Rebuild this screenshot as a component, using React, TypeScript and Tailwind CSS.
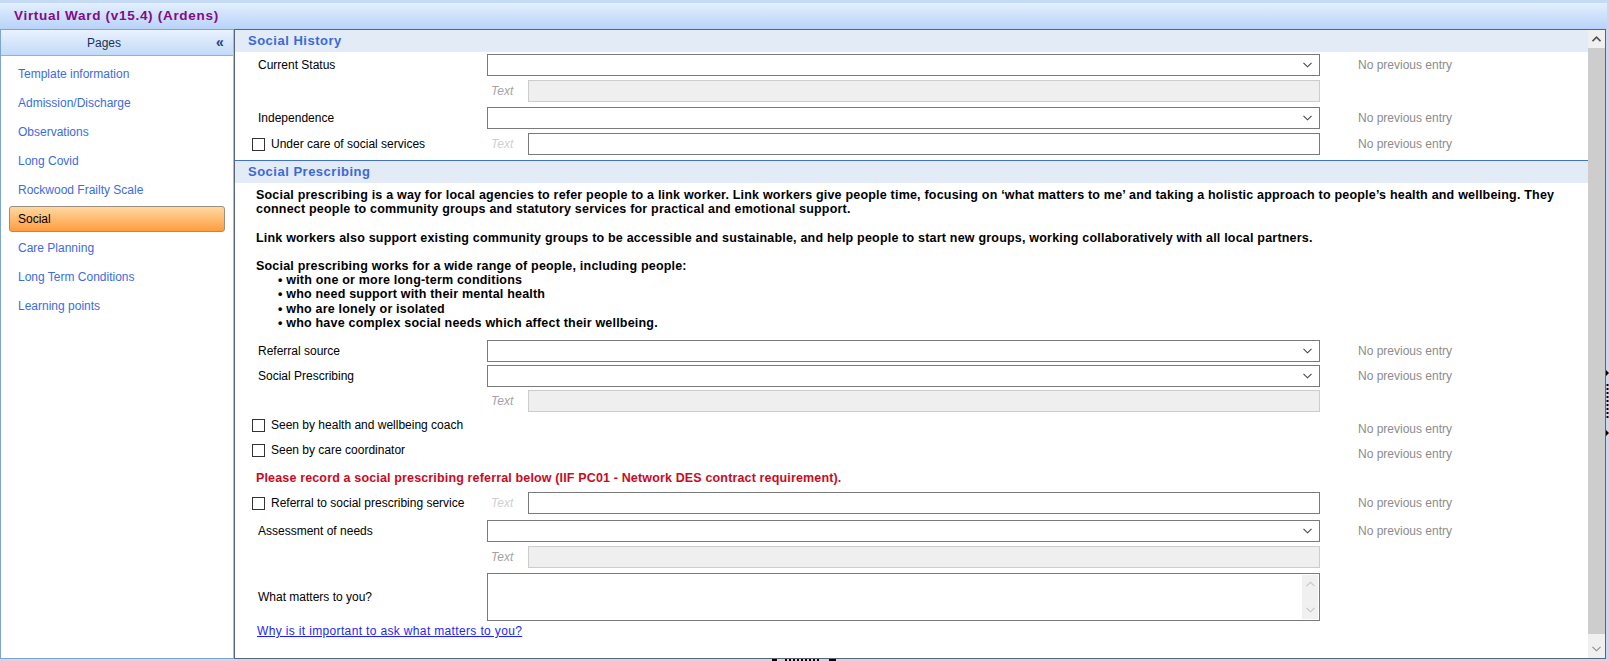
import React from "react";

const navItems = [
  "Template information",
  "Admission/Discharge",
  "Observations",
  "Long Covid",
  "Rockwood Frailty Scale",
  "Social",
  "Care Planning",
  "Long Term Conditions",
  "Learning points",
];

function ChevronDown({ color = "#444" }: { color?: string }) {
  return (
    <svg width="9" height="6" viewBox="0 0 9 6">
      <path d="M0.5 0.8 L4.5 4.8 L8.5 0.8" fill="none" stroke={color} strokeWidth="1.1" />
    </svg>
  );
}

function ChevronUp({ color = "#444", width = 1.1 }: { color?: string; width?: number }) {
  return (
    <svg width="9" height="6" viewBox="0 0 9 6">
      <path d="M0.5 5.2 L4.5 1.2 L8.5 5.2" fill="none" stroke={color} strokeWidth={width} />
    </svg>
  );
}

function Dropdown() {
  return (
    <div className="h-[22px] w-[833px] border border-[#7a7a7a] bg-white flex items-center justify-end pr-[7px]">
      <ChevronDown />
    </div>
  );
}

function TextField({ disabled }: { disabled?: boolean }) {
  return (
    <div className="flex items-center pl-[4px] h-[22px]">
      <span
        className={
          disabled
            ? "w-[37px] italic text-[#a3a3a3]"
            : "w-[37px] italic text-[#d0d0d0]"
        }
      >
        Text
      </span>
      {disabled ? (
        <div className="h-[22px] w-[792px] border border-[#cccccc] bg-[#efefef]" />
      ) : (
        <div className="h-[22px] w-[792px] border border-[#7a7a7a] bg-white" />
      )}
    </div>
  );
}

function Checkbox({ label }: { label: string }) {
  return (
    <div className="flex items-center h-[14px] pl-[17px]">
      <div className="w-[13px] h-[13px] border border-[#333333] bg-white shrink-0" />
      <span className="ml-[6px] whitespace-nowrap">{label}</span>
    </div>
  );
}

function Label({ text }: { text: string }) {
  return <div className="pl-[23px] whitespace-nowrap">{text}</div>;
}

function Prev() {
  return <div className="ml-[38px] text-[#8c8c8c] whitespace-nowrap">No previous entry</div>;
}

function SectionBand({ title }: { title: string }) {
  return (
    <div className="h-[22px] bg-[#e3ebf7] pl-[13px] flex items-center text-[13px] tracking-[0.5px] font-bold text-[#3b69d5]">
      {title}
    </div>
  );
}

export default function App() {
  return (
    <div className="relative w-[1609px] h-[661px] bg-[#c6daf4] font-['Liberation_Sans',Arial,sans-serif] text-[12px] text-black overflow-hidden">
      {/* title bar */}
      <div className="h-[29px] border-t-[3px] border-[#c5daf4] bg-linear-to-b from-[#e3effe] to-[#b8d3f8] flex items-center pl-[14px] w-[1607px]">
        <span className="text-[13.5px] tracking-[0.7px] font-bold text-[#860a86]">Virtual Ward (v15.4) (Ardens)</span>
      </div>

      <div className="flex h-[630px]">
        {/* pages panel */}
        <div className="w-[234px] h-full border border-[#7ea4d6] border-r-[#a9bdd6] bg-white flex flex-col">
          <div className="h-[26px] border-b border-[#8db0df] bg-linear-to-b from-[#e9f2fe] to-[#c3daf8] flex items-center">
            <div className="flex-1 text-center text-[#15325a]">Pages</div>
            <div className="w-[26px] text-center text-[14px] font-bold leading-none text-[#23427a] pb-[2px]">«</div>
          </div>
          <div className="pt-[3px] flex flex-col">
            {navItems.map((item) =>
              item === "Social" ? (
                <div key={item} className="h-[29px] px-[8px] flex items-center">
                  <div className="h-[26px] w-full rounded-[3px] border border-[#9a8f80] bg-linear-to-b from-[#ffd89e] to-[#ff9c3a] flex items-center pl-[8px] text-black">
                    {item}
                  </div>
                </div>
              ) : (
                <div key={item} className="h-[29px] pl-[17px] flex items-center text-[#3d6be0]">
                  {item}
                </div>
              )
            )}
          </div>
        </div>

        {/* main form panel */}
        <div className="w-[1372px] h-full border border-[#56657c] bg-white flex">
          <div className="flex-1 flex flex-col">
            <SectionBand title="Social History" />

            <div className="mt-[2px] h-[22px] flex items-center">
              <div className="w-[252px] shrink-0"><Label text="Current Status" /></div>
              <Dropdown />
              <Prev />
            </div>
            <div className="mt-[4px] h-[22px] flex items-center">
              <div className="w-[252px] shrink-0" />
              <div className="w-[833px]"><TextField disabled /></div>
            </div>
            <div className="mt-[5px] h-[22px] flex items-center">
              <div className="w-[252px] shrink-0"><Label text="Independence" /></div>
              <Dropdown />
              <Prev />
            </div>
            <div className="mt-[4px] h-[22px] flex items-center">
              <div className="w-[252px] shrink-0"><Checkbox label="Under care of social services" /></div>
              <div className="w-[833px]"><TextField /></div>
              <Prev />
            </div>

            <div className="mt-[5px] border-t border-[#3f72d0]">
              <SectionBand title="Social Prescribing" />
            </div>

            <div className="mt-[5px] pl-[21px] font-bold text-[12.5px] tracking-[0.2px] leading-[14.2px] whitespace-nowrap">
              <div>
                Social prescribing is a way for local agencies to refer people to a link worker. Link workers give people time, focusing on ‘what matters to me’ and taking a holistic approach to people’s health and wellbeing. They
              </div>
              <div>connect people to community groups and statutory services for practical and emotional support.</div>
              <div>&nbsp;</div>
              <div>Link workers also support existing community groups to be accessible and sustainable, and help people to start new groups, working collaboratively with all local partners.</div>
              <div>&nbsp;</div>
              <div>Social prescribing works for a wide range of people, including people:</div>
              <div className="pl-[22px]">• with one or more long-term conditions</div>
              <div className="pl-[22px]">• who need support with their mental health</div>
              <div className="pl-[22px]">• who are lonely or isolated</div>
              <div className="pl-[22px]">• who have complex social needs which affect their wellbeing.</div>
            </div>

            <div className="mt-[10px] h-[22px] flex items-center">
              <div className="w-[252px] shrink-0"><Label text="Referral source" /></div>
              <Dropdown />
              <Prev />
            </div>
            <div className="mt-[3px] h-[22px] flex items-center">
              <div className="w-[252px] shrink-0"><Label text="Social Prescribing" /></div>
              <Dropdown />
              <Prev />
            </div>
            <div className="mt-[3px] h-[22px] flex items-center">
              <div className="w-[252px] shrink-0" />
              <div className="w-[833px]"><TextField disabled /></div>
            </div>
            <div className="mt-[6px] h-[22px] flex items-start">
              <div className="w-[252px] shrink-0"><Checkbox label="Seen by health and wellbeing coach" /></div>
              <div className="w-[833px] shrink-0" />
              <div className="h-[22px] flex items-center"><Prev /></div>
            </div>
            <div className="mt-[3px] h-[22px] flex items-start">
              <div className="w-[252px] shrink-0"><Checkbox label="Seen by care coordinator" /></div>
              <div className="w-[833px] shrink-0" />
              <div className="h-[22px] flex items-center"><Prev /></div>
            </div>

            <div className="mt-[6px] pl-[21px] leading-[14px] font-bold text-[12.5px] tracking-[0.15px] text-[#cc0a1e] whitespace-nowrap">
              Please record a social prescribing referral below (IIF PC01 - Network DES contract requirement).
            </div>

            <div className="mt-[7px] h-[22px] flex items-center">
              <div className="w-[252px] shrink-0"><Checkbox label="Referral to social prescribing service" /></div>
              <div className="w-[833px]"><TextField /></div>
              <Prev />
            </div>
            <div className="mt-[6px] h-[22px] flex items-center">
              <div className="w-[252px] shrink-0"><Label text="Assessment of needs" /></div>
              <Dropdown />
              <Prev />
            </div>
            <div className="mt-[4px] h-[22px] flex items-center">
              <div className="w-[252px] shrink-0" />
              <div className="w-[833px]"><TextField disabled /></div>
            </div>
            <div className="mt-[5px] h-[48px] flex items-center">
              <div className="w-[252px] shrink-0"><Label text="What matters to you?" /></div>
              <div className="w-[833px] h-[48px] border border-[#7a7a7a] bg-white flex justify-end p-[1px]">
                <div className="w-[16px] h-full bg-[#f0f0f0] flex flex-col items-center justify-between py-[6px]">
                  <ChevronUp color="#c4c4c4" />
                  <ChevronDown color="#c4c4c4" />
                </div>
              </div>
            </div>

            <div className="mt-[3px] pl-[22px] leading-[14px]">
              <span className="text-[#1e1eff] underline tracking-[0.35px]">Why is it important to ask what matters to you?</span>
            </div>
          </div>

          {/* scrollbar */}
          <div className="w-[17px] shrink-0 flex flex-col">
            <div className="h-[18px] bg-[#f0f0f0] flex items-center justify-center">
              <ChevronUp color="#505050" width={1.6} />
            </div>
            <div className="flex-1 bg-[#cdcdcd]" />
            <div className="h-[24px] bg-[#f0f0f0] flex items-end justify-center pb-[6px]">
              <ChevronDown color="#8a8a8a" />
            </div>
          </div>
        </div>
      </div>

      {/* splitter grips */}
      <div className="absolute left-[772px] top-[659px] h-[2px] flex items-start">
        <div className="w-[5px] h-[2px] bg-black" />
        <div className="ml-[8px] w-[34px] h-[2px] bg-[repeating-linear-gradient(90deg,#000_0_2px,transparent_2px_4px)]" />
        <div className="ml-[10px] w-[7px] h-[2px] bg-black" />
      </div>
      <div className="absolute left-[1606px] top-[370px]">
        <svg width="3" height="66" viewBox="0 0 3 66">
          <path d="M0 0 L3 3 L0 6 Z" fill="#000" />
          <path d="M1.5 14 V50" stroke="#000" strokeWidth="2" strokeDasharray="2 2" />
          <path d="M0 60 L3 63 L0 66 Z" fill="#000" />
        </svg>
      </div>
    </div>
  );
}
